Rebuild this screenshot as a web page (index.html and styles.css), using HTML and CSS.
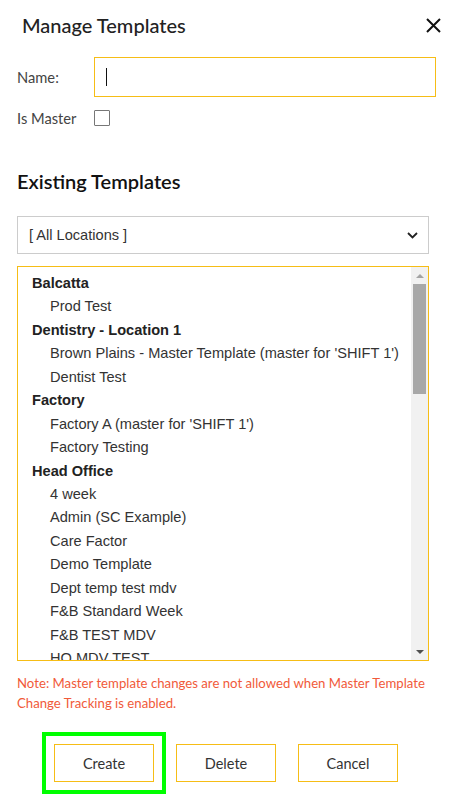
FILE: index.html
```html
<!DOCTYPE html>
<html lang="en">
<head>
<meta charset="utf-8">
<title>Manage Templates</title>
<link rel="stylesheet" href="styles.css">
</head>
<body>
<div class="dialog">
  <div class="header">
    <h1 class="title">Manage Templates</h1>
    <button class="close" aria-label="Close">
      <svg width="15" height="15" viewBox="0 0 15 15"><path d="M1 1 L14 14 M14 1 L1 14" stroke="#111" stroke-width="2" fill="none"/></svg>
    </button>
  </div>

  <div class="form-row name-row">
    <label class="label">Name:</label>
    <div class="input"><span class="caret"></span></div>
  </div>
  <div class="form-row master-row">
    <label class="label">Is Master</label>
    <span class="checkbox"></span>
  </div>

  <h2 class="section">Existing Templates</h2>

  <div class="select">
    <span class="select-text">[ All Locations ]</span>
    <svg class="chev" width="11" height="7" viewBox="0 0 11 7"><path d="M1 1 L5.5 5.5 L10 1" stroke="#222" stroke-width="1.8" fill="none"/></svg>
  </div>

  <div class="listbox">
    <div class="list">
      <div class="grp">Balcatta</div>
      <div class="opt">Prod Test</div>
      <div class="grp">Dentistry - Location 1</div>
      <div class="opt">Brown Plains - Master Template (master for 'SHIFT 1')</div>
      <div class="opt">Dentist Test</div>
      <div class="grp">Factory</div>
      <div class="opt">Factory A (master for 'SHIFT 1')</div>
      <div class="opt">Factory Testing</div>
      <div class="grp">Head Office</div>
      <div class="opt">4 week</div>
      <div class="opt">Admin (SC Example)</div>
      <div class="opt">Care Factor</div>
      <div class="opt">Demo Template</div>
      <div class="opt">Dept temp test mdv</div>
      <div class="opt">F&amp;B Standard Week</div>
      <div class="opt">F&amp;B TEST MDV</div>
      <div class="opt">HO MDV TEST</div>
    </div>
    <div class="scrollbar">
      <div class="sb-btn"><span class="tri-up"></span></div>
      <div class="sb-track"><div class="sb-thumb"></div></div>
      <div class="sb-btn"><span class="tri-down"></span></div>
    </div>
  </div>

  <p class="note">Note: Master template changes are not allowed when Master Template Change Tracking is enabled.</p>

  <div class="buttons">
    <button class="btn focused">Create</button>
    <button class="btn">Delete</button>
    <button class="btn">Cancel</button>
  </div>
</div>
</body>
</html>
```

FILE: styles.css
```css
* { box-sizing: border-box; }
html, body { margin: 0; padding: 0; background: #fff; }
body { font-family: Lato, "Liberation Sans", Arial, sans-serif; color: #333; }

.dialog { width: 453px; height: 801px; padding: 0 17px; }

.header { display: flex; align-items: center; justify-content: space-between; height: 50px; padding-left: 5px; margin-right: -5px; }
.title { margin: 0; font-size: 20px; font-weight: 500; color: #222; }
.close { border: 0; background: none; padding: 0; width: 15px; height: 15px; display: flex; }

.form-row { display: flex; align-items: center; }
.label { width: 77px; font-size: 14.7px; color: #444; }
.name-row { margin-top: 7px; height: 40px; }
.input { flex: 1; height: 40px; border: 1px solid #f6bd16; display: flex; align-items: center; padding-left: 11px; }
.caret { width: 1px; height: 18px; background: #111; }
.master-row { margin-top: 13px; height: 16px; }
.checkbox { width: 16px; height: 16px; border: 1px solid #777; border-radius: 1px; background: #fff; }

.section { margin: 43px 0 0 0; font-size: 20px; font-weight: 600; color: #111; line-height: 24px; }

.select { margin-top: 23px; width: 412px; height: 38px; border: 1px solid #ccc; display: flex; align-items: center; justify-content: space-between; padding: 0 10px 0 11px; font-family: "Liberation Sans", Arial, sans-serif; font-size: 14.6px; color: #333; }
.chev { display: block; }

.listbox { margin-top: 12px; width: 412px; height: 395px; border: 1px solid #f6bd16; display: flex; overflow: hidden; }
.list { flex: 1; overflow: hidden; padding-top: 5px; font-family: "Liberation Sans", Arial, sans-serif; font-size: 14.6px; color: #333; }
.grp, .opt { height: 23.45px; line-height: 23.45px; white-space: nowrap; }
.grp { font-weight: bold; color: #222; padding-left: 14px; }
.opt { padding-left: 32px; }

.scrollbar { width: 17px; background: #f1f1f1; display: flex; flex-direction: column; }
.sb-btn { height: 17px; display: flex; align-items: center; justify-content: center; }
.sb-track { flex: 1; padding: 0 2px; }
.sb-thumb { height: 110px; background: #a8a8a8; }
.tri-up { width: 0; height: 0; border-left: 4px solid transparent; border-right: 4px solid transparent; border-bottom: 4px solid #a3a3a3; }
.tri-down { width: 0; height: 0; border-left: 4px solid transparent; border-right: 4px solid transparent; border-top: 4px solid #505050; }

.note { margin: 13px 0 0 0; font-size: 13.2px; line-height: 19.5px; color: #f15a3a; }

.buttons { display: flex; gap: 22px; margin-top: 31px; padding-left: 37px; }
.btn { width: 100px; height: 38px; border: 1px solid #f6bd16; background: #fff; font-family: Lato, "Liberation Sans", sans-serif; font-size: 14.5px; color: #333; padding: 0; }
.focused { outline: 4px solid #00ff00; outline-offset: 8px; }
```
